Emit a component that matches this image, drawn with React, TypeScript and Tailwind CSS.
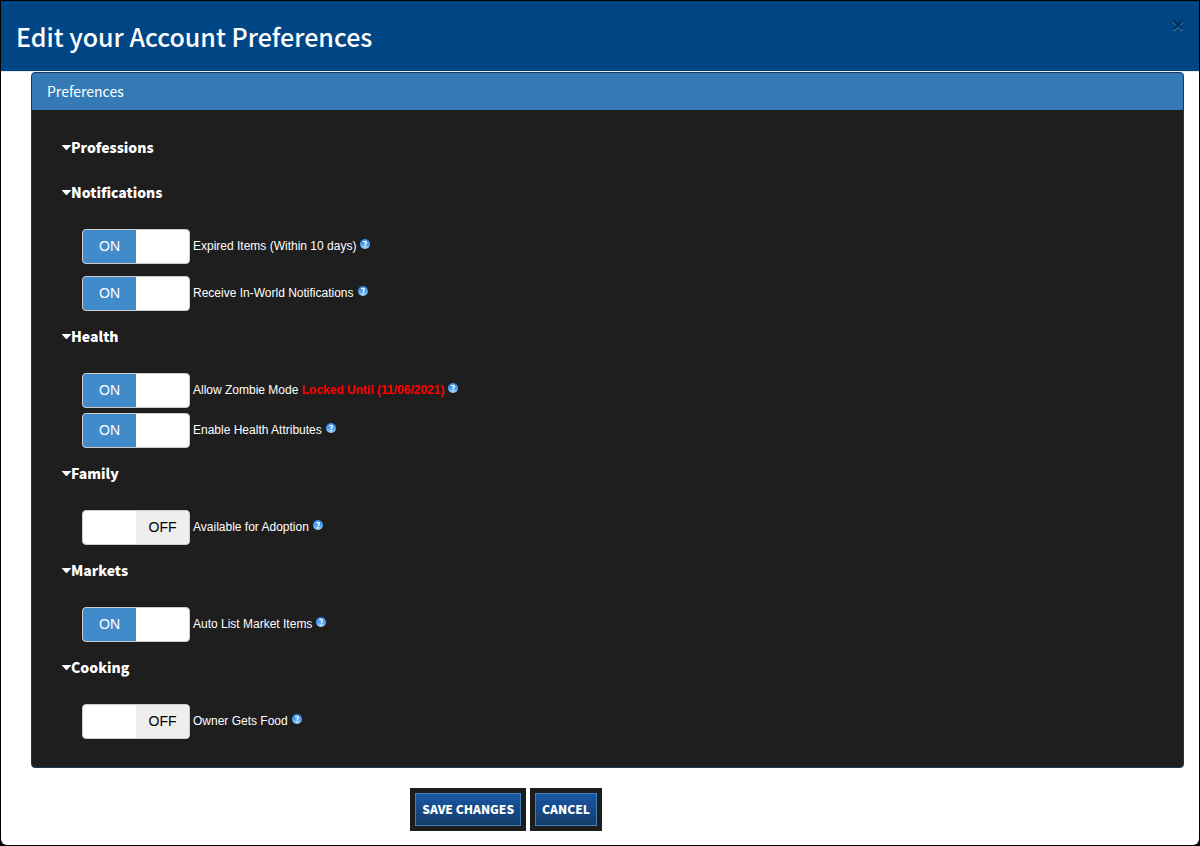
import { useState } from "react"

type Preference = {
  id: string
  label: string
  locked?: string
  on: boolean
}

type Section = {
  title: string
  spacing: string
  items: Preference[]
}

const SECTIONS: Section[] = [
  { title: "Professions", spacing: "gap-3", items: [] },
  {
    title: "Notifications",
    spacing: "gap-3",
    items: [
      { id: "expired", label: "Expired Items (Within 10 days)", on: true },
      { id: "inworld", label: "Receive In-World Notifications", on: true },
    ],
  },
  {
    title: "Health",
    spacing: "gap-[5px]",
    items: [
      { id: "zombie", label: "Allow Zombie Mode", locked: "Locked Until (11/06/2021)", on: true },
      { id: "attributes", label: "Enable Health Attributes", on: true },
    ],
  },
  { title: "Family", spacing: "gap-3", items: [{ id: "adoption", label: "Available for Adoption", on: false }] },
  { title: "Markets", spacing: "gap-3", items: [{ id: "autolist", label: "Auto List Market Items", on: true }] },
  { title: "Cooking", spacing: "gap-3", items: [{ id: "food", label: "Owner Gets Food", on: false }] },
]

function HelpIcon() {
  return (
    <svg className="mb-[6px] ml-1 size-[10px]" viewBox="0 0 10 10" aria-hidden>
      <defs>
        <linearGradient id="help" x1="0" y1="0" x2="0" y2="1">
          <stop offset="0" stopColor="#2f86e0" />
          <stop offset="0.5" stopColor="#4a9df0" />
          <stop offset="1" stopColor="#a5dcff" />
        </linearGradient>
      </defs>
      <circle cx="5" cy="5" r="5" fill="url(#help)" />
      <path d="M3.5 3.2C3.9 1.9 6.5 2 6.5 3.5C6.5 4.6 5.2 4.5 5.2 6" fill="none" stroke="#fff" strokeWidth="1.3" />
      <rect x="4.5" y="6.9" width="1.3" height="1.3" fill="#fff" />
    </svg>
  )
}

function ToggleRow({ item }: { item: Preference }) {
  const [on, setOn] = useState(item.on)

  return (
    <label className="relative flex cursor-pointer items-center text-xs text-white">
      <input
        id={item.id}
        type="checkbox"
        className="sr-only"
        checked={on}
        onChange={(e) => setOn(e.target.checked)}
      />
      <span className="mr-[3px] flex h-[35px] w-[108px] overflow-hidden rounded border border-[#ccc] bg-white text-center text-sm leading-[33px]">
        <span className={on ? "flex-1 bg-[#428bca] text-white" : "flex-1"}>{on && "ON"}</span>
        <span className={on ? "flex-1" : "flex-1 bg-[#eee] text-black"}>{!on && "OFF"}</span>
      </span>
      <span className="pb-0.5">
        {item.label}
        {item.locked && <strong className="text-[#f00]"> {item.locked}</strong>}
      </span>
      <HelpIcon />
    </label>
  )
}

function PreferenceSection({ section }: { section: Section }) {
  const [open, setOpen] = useState(true)

  return (
    <section>
      <h3 className="pb-[9px]">
        <button
          type="button"
          aria-expanded={open}
          onClick={() => setOpen(!open)}
          className="flex h-[22px] items-center font-['Noto_Sans_CJK_SC',sans-serif] text-[14px] leading-[22px] font-black text-white"
        >
          <svg className="h-[5px] w-[9px]" viewBox="0 0 9 5" fill="currentColor" aria-hidden>
            <path d="M0 0H9V0.6L4.9 5H4.1L0 0.6Z" />
          </svg>
          {section.title}
        </button>
      </h3>
      {open && section.items.length > 0 && (
        <div className={`flex flex-col items-start pt-[17px] pl-5 ${section.spacing}`}>
          {section.items.map((item) => (
            <ToggleRow key={item.id} item={item} />
          ))}
        </div>
      )}
    </section>
  )
}

function ActionButton({ children }: { children: string }) {
  return (
    <button
      type="button"
      className="border-[5px] border-[#1c1e1e] font-['Noto_Sans_CJK_SC',sans-serif] text-[12px] font-black text-white"
    >
      <span className="block h-[33px] border border-[#4482bd] bg-linear-to-b from-[#1b57a6] to-[#133d69] px-[6px] leading-[29px]">
        {children}
      </span>
    </button>
  )
}

export default function App() {
  return (
    <main className="min-h-screen bg-black p-px font-['Liberation_Sans',Arial,sans-serif]">
      <div role="dialog" aria-labelledby="title" className="rounded-b-md bg-white pb-[14px]">
        <header className="flex items-start justify-between border-b border-[#e5e5e5] bg-[#004684] px-[15px]">
          <h1
            id="title"
            className="font-['Noto_Sans_CJK_SC',sans-serif] text-[25px] leading-[70px] font-medium text-white"
          >
            Edit your Account Preferences
          </h1>
          <button
            type="button"
            aria-label="Close"
            className="mt-[13px] text-[21px] leading-[21px] font-bold text-black opacity-30 [text-shadow:0_1px_0_#fff]"
          >
            ×
          </button>
        </header>

        <div className="mr-[15px] ml-[30px] overflow-hidden rounded border border-[#163a5e] bg-[#1e1e1e]">
          <h2 className="bg-[#337ab7] px-[15px] font-['Noto_Sans_CJK_SC',sans-serif] text-[14px] leading-[37px] text-white">
            Preferences
          </h2>
          <div className="flex flex-col gap-[14px] px-[30px] pt-[26px] pb-7">
            {SECTIONS.map((section) => (
              <PreferenceSection key={section.title} section={section} />
            ))}
          </div>
        </div>

        <footer className="mt-5 ml-[calc(33.333%+10px)] flex gap-1">
          <ActionButton>SAVE CHANGES</ActionButton>
          <ActionButton>CANCEL</ActionButton>
        </footer>
      </div>
    </main>
  )
}
